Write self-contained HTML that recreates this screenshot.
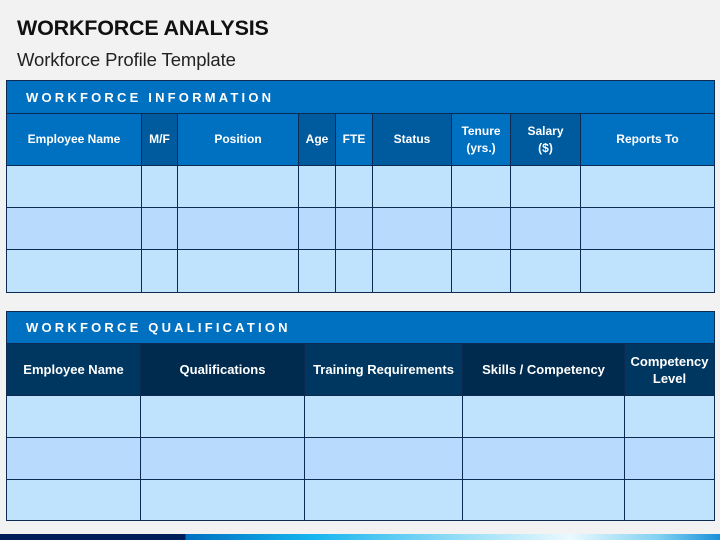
<!DOCTYPE html>
<html><head><meta charset="utf-8"><style>
*{margin:0;padding:0;box-sizing:border-box}
body{width:720px;height:540px;background:#f2f2f2;position:relative;overflow:hidden;font-family:"Liberation Sans",sans-serif}
.t1{position:absolute;left:17px;top:16px;font-size:21.5px;font-weight:bold;color:#111;letter-spacing:-0.2px}
.t2{position:absolute;left:17px;top:49px;font-size:18.5px;color:#222;letter-spacing:-0.1px}
table{position:absolute;left:6px;border-collapse:collapse;table-layout:fixed}
td,th{border:1.5px solid #0c2a52;color:#fff;font-size:12px;font-weight:bold;text-align:center;line-height:17px;padding:0}
.cap{background:#0070c0;text-align:left;padding-left:19px;font-size:13px;letter-spacing:3.2px}
tr.r1 td{background:#bfe3fd}
tr.r2 td{background:#b8dafc}
.a{background:#0070c0}.b{background:#005a9e}
.c{background:#003760;font-size:13px}.d{background:#002b4e;font-size:13px}
.bar{position:absolute;left:0;top:534px;width:720px;height:6px;background:linear-gradient(90deg,#001e5a 0,#001e5a 185px,#0070c0 186px,#14b4ee 310px,#9ee0f8 470px,#eaf9fe 570px,#7fd0f2 660px,#1a90d8 720px)}
</style></head><body>
<div class="t1">WORKFORCE ANALYSIS</div>
<div class="t2">Workforce Profile Template</div>
<table style="top:80px;width:708px">
<colgroup><col style="width:135px"><col style="width:36px"><col style="width:121px"><col style="width:37px"><col style="width:37px"><col style="width:79px"><col style="width:59px"><col style="width:70px"><col style="width:134px"></colgroup>
<tr style="height:33px"><td colspan="9" class="cap">WORKFORCE INFORMATION</td></tr>
<tr style="height:52px"><th class="a">Employee Name</th><th class="b">M/F</th><th class="a">Position</th><th class="b">Age</th><th class="a">FTE</th><th class="b">Status</th><th class="a">Tenure<br>(yrs.)</th><th class="b">Salary<br>($)</th><th class="a">Reports To</th></tr>
<tr class="r1" style="height:42px"><td></td><td></td><td></td><td></td><td></td><td></td><td></td><td></td><td></td></tr>
<tr class="r2" style="height:42px"><td></td><td></td><td></td><td></td><td></td><td></td><td></td><td></td><td></td></tr>
<tr class="r1" style="height:43px"><td></td><td></td><td></td><td></td><td></td><td></td><td></td><td></td><td></td></tr>
</table>
<table style="top:311px;width:708px">
<colgroup><col style="width:134px"><col style="width:164px"><col style="width:158px"><col style="width:162px"><col style="width:90px"></colgroup>
<tr style="height:32px"><td colspan="5" class="cap">WORKFORCE QUALIFICATION</td></tr>
<tr style="height:52px"><th class="c">Employee Name</th><th class="d">Qualifications</th><th class="c">Training Requirements</th><th class="d">Skills / Competency</th><th class="c">Competency<br>Level</th></tr>
<tr class="r1" style="height:42px"><td></td><td></td><td></td><td></td><td></td></tr>
<tr class="r2" style="height:42px"><td></td><td></td><td></td><td></td><td></td></tr>
<tr class="r1" style="height:41px"><td></td><td></td><td></td><td></td><td></td></tr>
</table>
<div class="bar"></div>
</body></html>
